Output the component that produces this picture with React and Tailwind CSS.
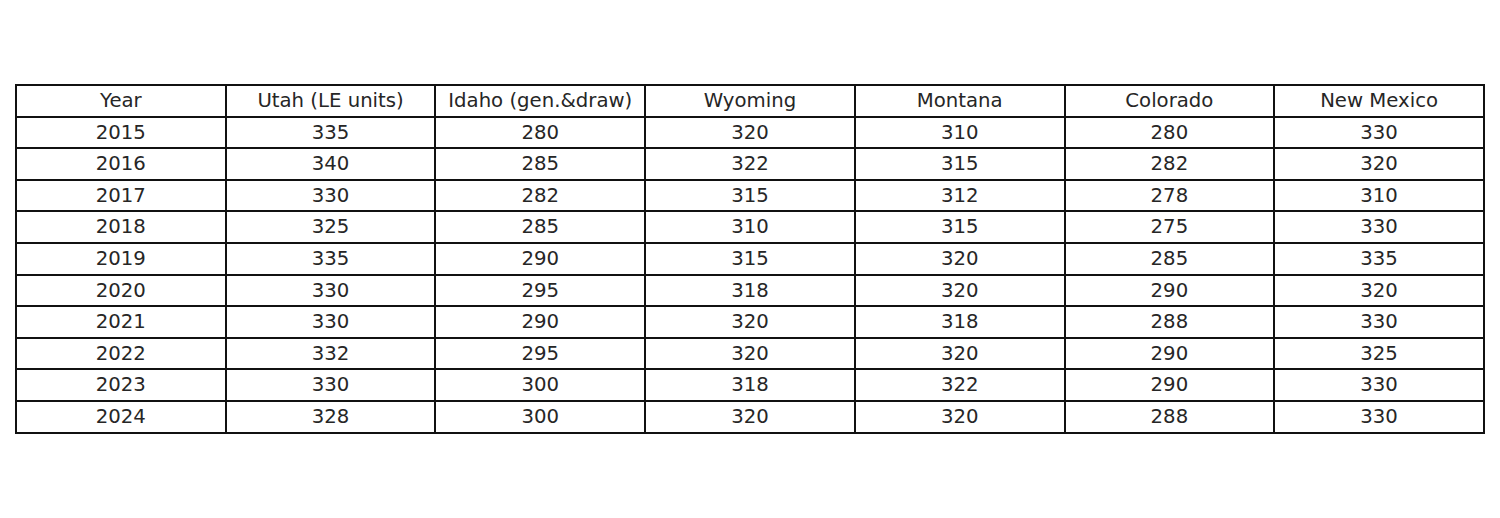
const headers = ["Year", "Utah (LE units)", "Idaho (gen.&draw)", "Wyoming", "Montana", "Colorado", "New Mexico"];

const rows = [
  [2015, 335, 280, 320, 310, 280, 330],
  [2016, 340, 285, 322, 315, 282, 320],
  [2017, 330, 282, 315, 312, 278, 310],
  [2018, 325, 285, 310, 315, 275, 330],
  [2019, 335, 290, 315, 320, 285, 335],
  [2020, 330, 295, 318, 320, 290, 320],
  [2021, 330, 290, 320, 318, 288, 330],
  [2022, 332, 295, 320, 320, 290, 325],
  [2023, 330, 300, 318, 322, 290, 330],
  [2024, 328, 300, 320, 320, 288, 330],
];

export default function App() {
  return (
    <div className="w-[1500px] h-[518px] bg-white pt-[84px] pl-[15px] font-['DejaVu_Sans',sans-serif] text-[#262626]">
      <table className="w-[1470px] table-fixed border-collapse border-2 border-[#111]">
        <thead>
          <tr className="h-[31.6px]">
            {headers.map((h) => (
              <th key={h} className="border-2 border-[#111] font-normal text-[19.7px] leading-none p-0 text-center">
                {h}
              </th>
            ))}
          </tr>
        </thead>
        <tbody>
          {rows.map((r) => (
            <tr key={r[0]} className="h-[31.6px]">
              {r.map((v, i) => (
                <td key={i} className="border-2 border-[#111] text-[19.7px] leading-none p-0 text-center">
                  {v}
                </td>
              ))}
            </tr>
          ))}
        </tbody>
      </table>
    </div>
  );
}
